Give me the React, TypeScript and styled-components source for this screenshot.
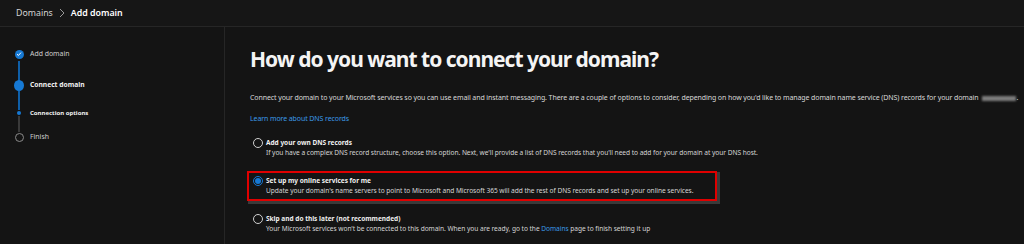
import React from "react";
import styled, { createGlobalStyle } from "styled-components";

const Global = createGlobalStyle`
  html, body { margin: 0; padding: 0; background: #141414; }
  body { font-family: "Noto Sans", "Open Sans", sans-serif; color: #e6e6e6; }
  * { box-sizing: border-box; }
`;

const Page = styled.div`
  width: 1024px;
  height: 244px;
  display: flex;
  flex-direction: column;
  overflow: hidden;
  background: #141414;
`;

const Header = styled.div`
  height: 27px;
  flex: none;
  display: flex;
  align-items: center;
  padding-left: 16px;
  gap: 4px;
  border-bottom: 1px solid #262626;
  background: #161616;
  font-size: 8.8px;
`;

const Crumb = styled.span<{ $current?: boolean }>`
  color: ${(p) => (p.$current ? "#ffffff" : "#d4d4d4")};
  font-weight: ${(p) => (p.$current ? 600 : 400)};
`;

const Body = styled.div`
  flex: 1;
  display: flex;
`;

const Sidebar = styled.div`
  width: 225px;
  flex: none;
  border-right: 1px solid #262626;
  padding: 22px 0 0 14px;
`;

const Step = styled.div<{ $h: number }>`
  position: relative;
  height: ${(p) => p.$h}px;
  display: flex;
  align-items: flex-start;
`;

const Marker = styled.div`
  width: 10px;
  height: 10px;
  flex: none;
  display: flex;
  align-items: center;
  justify-content: center;
`;

const Dot = styled.div<{ $kind: "done" | "current" | "sub" | "todo" }>`
  border-radius: 50%;
  display: flex;
  align-items: center;
  justify-content: center;
  ${(p) =>
    p.$kind === "done"
      ? "width:9px;height:9px;background:#1679d4;"
      : p.$kind === "current"
      ? "width:11px;height:11px;background:#1679d4;"
      : p.$kind === "sub"
      ? "width:4px;height:4px;background:#1679d4;"
      : "width:9px;height:9px;border:1px solid #8a8a8a;"}
`;

const Line = styled.div<{ $top: number; $h: number; $blue?: boolean }>`
  position: absolute;
  left: 4px;
  top: ${(p) => p.$top}px;
  width: 2px;
  height: ${(p) => p.$h}px;
  background: ${(p) => (p.$blue ? "#0f5fa8" : "#3a3a3a")};
`;

const StepLabel = styled.span<{ $bold?: boolean; $small?: boolean }>`
  margin-left: 6px;
  font-size: ${(p) => (p.$small ? "6px" : p.$bold ? "6.7px" : "6.9px")};
  line-height: 10px;
  color: ${(p) => (p.$bold ? "#f2f2f2" : "#cfcfcf")};
  font-weight: ${(p) => (p.$bold ? 700 : 400)};
`;

const Main = styled.div`
  flex: 1;
  padding: 16px 0 0 25px;
  min-width: 0;
`;

const Title = styled.h1`
  margin: 0;
  font-size: 21px;
  letter-spacing: -1px;
  line-height: 32px;
  font-weight: 700;
  color: #f4f4f4;
`;

const Para = styled.p`
  margin: 18px 0 0;
  font-size: 7px;
  letter-spacing: -0.1px;
  line-height: 10px;
  color: #d8d8d8;
  white-space: nowrap;
`;

const Blur = styled.span`
  display: inline-block;
  width: 34px;
  height: 5px;
  background: #7c7c7c;
  filter: blur(1.2px);
  vertical-align: middle;
  margin: 0 1px 0 3px;
`;

const Link = styled.a`
  color: #3b9ae8;
  text-decoration: none;
`;

const LearnMore = styled.div`
  margin-top: 11px;
  font-size: 7px;
  letter-spacing: -0.1px;
  line-height: 10px;
`;

const Options = styled.div`
  margin-top: 9px;
  display: flex;
  flex-direction: column;
  gap: 8px;
  margin-left: -3px;
`;

const Option = styled.div<{ $selected?: boolean }>`
  position: relative;
  display: flex;
  align-items: flex-start;
  gap: 3px;
  padding: 3px 8px 3px 4px;
  width: ${(p) => (p.$selected ? "470px" : "auto")};
  ${(p) =>
    p.$selected
      ? "box-shadow: 2px 2px 0 1px #3a3a3a; border: 2px solid #e00000;"
      : "border: 2px solid transparent;"}
`;

const Radio = styled.div<{ $checked?: boolean }>`
  width: 10px;
  height: 10px;
  flex: none;
  border-radius: 50%;
  border: 1px solid ${(p) => (p.$checked ? "#1679d4" : "#d0d0d0")};
  display: flex;
  align-items: center;
  justify-content: center;
  &::after {
    content: "";
    display: ${(p) => (p.$checked ? "block" : "none")};
    width: 6px;
    height: 6px;
    border-radius: 50%;
    background: #1679d4;
  }
`;

const OptText = styled.div`
  display: flex;
  flex-direction: column;
`;

const OptTitle = styled.div`
  font-size: 6.5px;
  line-height: 10px;
  font-weight: 700;
  color: #f0f0f0;
`;

const OptDesc = styled.div`
  font-size: 6.6px;
  letter-spacing: -0.04px;
  line-height: 10px;
  color: #d4d4d4;
  white-space: nowrap;
`;

const Check = () => (
  <svg width="6" height="6" viewBox="0 0 6 6">
    <path d="M1 3.2 L2.4 4.5 L5 1.6" stroke="#fff" strokeWidth="1" fill="none" />
  </svg>
);

export default function App() {
  return (
    <Page>
      <Global />
      <Header>
        <Crumb>Domains</Crumb>
        <svg width="10" height="10" viewBox="0 0 10 10">
          <path d="M3 1 L7 5 L3 9" stroke="#a8a8a8" strokeWidth="0.9" fill="none" />
        </svg>
        <Crumb $current>Add domain</Crumb>
      </Header>
      <Body>
        <Sidebar>
          <Step $h={31}>
            <Marker>
              <Dot $kind="done">
                <Check />
              </Dot>
            </Marker>
            <StepLabel>Add domain</StepLabel>
            <Line $top={12} $h={22} $blue />
          </Step>
          <Step $h={28}>
            <Marker>
              <Dot $kind="current" />
            </Marker>
            <StepLabel $bold>Connect domain</StepLabel>
            <Line $top={11} $h={19} $blue />
          </Step>
          <Step $h={24}>
            <Marker>
              <Dot $kind="sub" />
            </Marker>
            <StepLabel $bold $small>Connection options</StepLabel>
            <Line $top={8} $h={16} />
          </Step>
          <Step $h={20}>
            <Marker>
              <Dot $kind="todo" />
            </Marker>
            <StepLabel>Finish</StepLabel>
          </Step>
        </Sidebar>
        <Main>
          <Title>How do you want to connect your domain?</Title>
          <Para>
            Connect your domain to your Microsoft services so you can use email and instant messaging. There are a
            couple of options to consider, depending on how you'd like to manage domain name service (DNS) records for
            your domain
            <Blur />.
          </Para>
          <LearnMore>
            <Link href="#">Learn more about DNS records</Link>
          </LearnMore>
          <Options>
            <Option>
              <Radio />
              <OptText>
                <OptTitle>Add your own DNS records</OptTitle>
                <OptDesc>
                  If you have a complex DNS record structure, choose this option. Next, we'll provide a list of DNS
                  records that you'll need to add for your domain at your DNS host.
                </OptDesc>
              </OptText>
            </Option>
            <Option $selected>
              <Radio $checked />
              <OptText>
                <OptTitle>Set up my online services for me</OptTitle>
                <OptDesc>
                  Update your domain's name servers to point to Microsoft and Microsoft 365 will add the rest of DNS
                  records and set up your online services.
                </OptDesc>
              </OptText>
            </Option>
            <Option>
              <Radio />
              <OptText>
                <OptTitle>Skip and do this later (not recommended)</OptTitle>
                <OptDesc>
                  Your Microsoft services won't be connected to this domain. When you are ready, go to the{" "}
                  <Link href="#">Domains</Link> page to finish setting it up
                </OptDesc>
              </OptText>
            </Option>
          </Options>
        </Main>
      </Body>
    </Page>
  );
}
